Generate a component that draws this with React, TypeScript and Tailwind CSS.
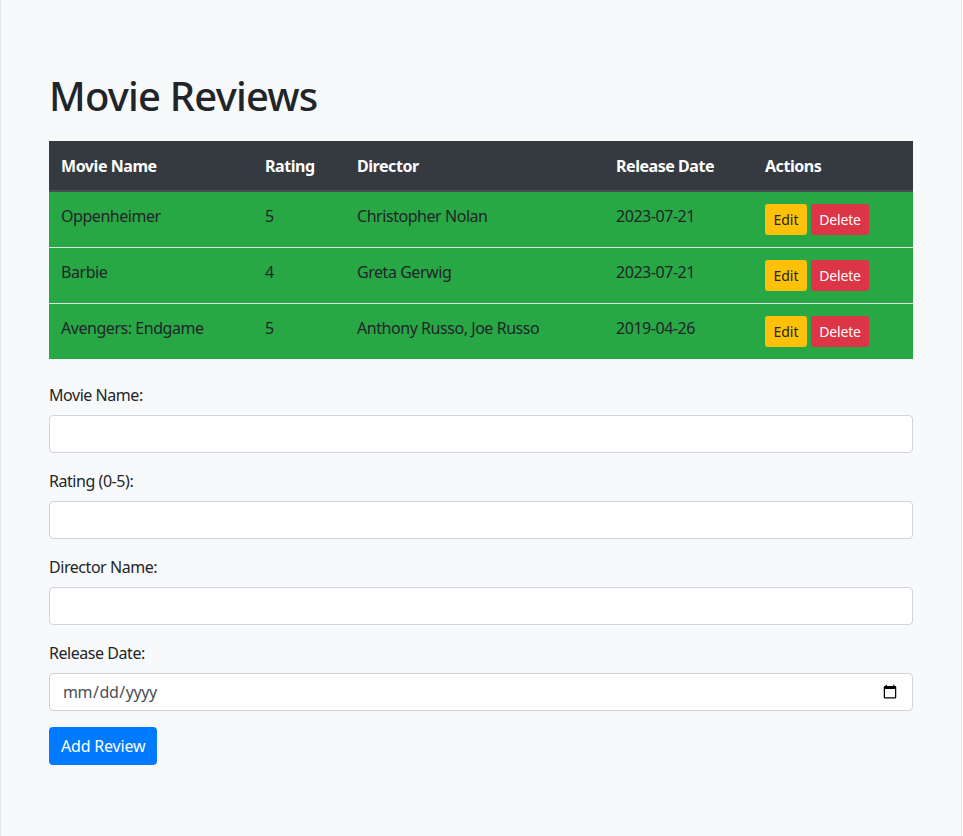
import React, { useState } from "react";

type Review = {
  name: string;
  rating: number;
  director: string;
  date: string;
};

const initialReviews: Review[] = [
  { name: "Oppenheimer", rating: 5, director: "Christopher Nolan", date: "2023-07-21" },
  { name: "Barbie", rating: 4, director: "Greta Gerwig", date: "2023-07-21" },
  { name: "Avengers: Endgame", rating: 5, director: "Anthony Russo, Joe Russo", date: "2019-04-26" },
];

export default function App() {
  const [reviews, setReviews] = useState<Review[]>(initialReviews);
  const [name, setName] = useState("");
  const [rating, setRating] = useState("");
  const [director, setDirector] = useState("");
  const [date, setDate] = useState("");

  const addReview = (e: React.FormEvent) => {
    e.preventDefault();
    if (!name) return;
    setReviews([...reviews, { name, rating: Number(rating), director, date }]);
    setName("");
    setRating("");
    setDirector("");
    setDate("");
  };

  const deleteReview = (index: number) => {
    setReviews(reviews.filter((_, i) => i !== index));
  };

  const inputClass =
    "block w-full h-[38px] px-3 bg-white border border-[#ced4da] rounded-[4px] text-base text-[#495057] outline-none focus:border-[#80bdff]";

  return (
    <div className="min-h-screen bg-white font-['Noto_Sans',sans-serif] text-base tracking-[-0.45px] text-[#212529]">
      <div className="w-[962px] min-h-[836px] bg-[#f8f9fa] border-x border-[#e3e5e8] px-12 pt-[72px] pb-16">
        <h1 className="text-[40px] leading-[48px] font-medium tracking-[-0.8px] mb-[21px]">Movie Reviews</h1>

        {/* Reviews table */}
        <table className="w-[864px] table-fixed border-collapse mb-6">
          <thead>
            <tr className="bg-[#343a40] text-white">
              <th className="w-[204px] px-3 pt-[13px] pb-3 text-left font-bold leading-6 border-b-2 border-[#454d55]">Movie Name</th>
              <th className="w-[92px] px-3 pt-[13px] pb-3 text-left font-bold leading-6 border-b-2 border-[#454d55]">Rating</th>
              <th className="w-[259px] px-3 pt-[13px] pb-3 text-left font-bold leading-6 border-b-2 border-[#454d55]">Director</th>
              <th className="w-[149px] px-3 pt-[13px] pb-3 text-left font-bold leading-6 border-b-2 border-[#454d55]">Release Date</th>
              <th className="w-[160px] px-3 pt-[13px] pb-3 text-left font-bold leading-6 border-b-2 border-[#454d55]">Actions</th>
            </tr>
          </thead>
          <tbody>
            {reviews.map((r, i) => (
              <tr key={i} className="bg-[#28a745] border-t border-[#dee2e6] first:border-t-0">
                <td className="p-3 align-top leading-6">{r.name}</td>
                <td className="p-3 align-top leading-6">{r.rating}</td>
                <td className="p-3 align-top leading-6">{r.director}</td>
                <td className="p-3 align-top leading-6">{r.date}</td>
                <td className="p-3 align-top leading-6">
                  <div className="flex gap-1">
                    <button className="w-[42px] h-[31px] text-sm leading-[21px] tracking-normal bg-[#ffc107] text-[#212529] rounded-[3px]">
                      Edit
                    </button>
                    <button
                      onClick={() => deleteReview(i)}
                      className="w-[58px] h-[31px] text-sm leading-[21px] tracking-[-0.15px] bg-[#dc3545] text-white rounded-[3px]"
                    >
                      Delete
                    </button>
                  </div>
                </td>
              </tr>
            ))}
          </tbody>
        </table>

        {/* Add review form */}
        <form onSubmit={addReview} className="w-[864px]">
          <div className="mb-4">
            <label className="block leading-6 mb-2">Movie Name:</label>
            <input className={inputClass} value={name} onChange={(e) => setName(e.target.value)} />
          </div>
          <div className="mb-4">
            <label className="block leading-6 mb-2">Rating (0-5):</label>
            <input
              type="number"
              min={0}
              max={5}
              className={inputClass}
              value={rating}
              onChange={(e) => setRating(e.target.value)}
            />
          </div>
          <div className="mb-4">
            <label className="block leading-6 mb-2">Director Name:</label>
            <input className={inputClass} value={director} onChange={(e) => setDirector(e.target.value)} />
          </div>
          <div className="mb-4">
            <label className="block leading-6 mb-2">Release Date:</label>
            <input type="date" className={inputClass} value={date} onChange={(e) => setDate(e.target.value)} />
          </div>
          <button type="submit" className="h-[38px] px-3 bg-[#007bff] text-white leading-6 tracking-[-0.2px] rounded-[4px]">
            Add Review
          </button>
        </form>
      </div>
    </div>
  );
}
